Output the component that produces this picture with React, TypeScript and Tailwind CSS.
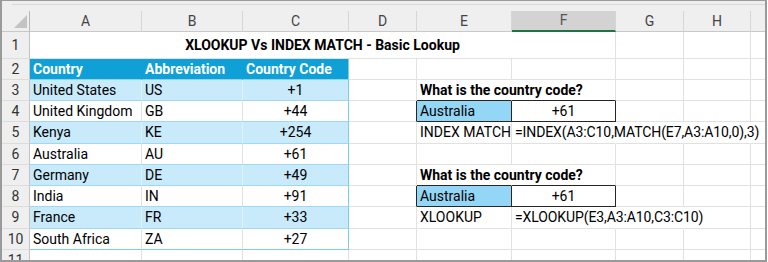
import React from "react";

const base = "flex items-center whitespace-nowrap px-[3px] text-[14px] text-black border-r border-b border-[#e1e1e1]";
const rh = "flex items-center justify-center text-[14px] text-[#333] bg-[#efefef] border-r border-b border-r-[#c4c4c4] border-b-[#dcdcdc]";
const ch = "flex items-center justify-center text-[14px] text-[#444] bg-[#efefef] border-r border-b border-r-[#d6d6d6] border-b-[#c8c8c8]";

const tblHead = "flex items-center whitespace-nowrap px-[3px] text-[14px] font-bold text-white bg-[#10a0d8] border-r border-b border-r-[#10a0d8] border-b-[#8ed3f1]";

function Cell({ c, children }: { c?: string; children?: React.ReactNode }) {
  return <div className={c ?? base}>{children}</div>;
}

const rows: [string, string, string][] = [
  ["United States", "US", "+1"],
  ["United Kingdom", "GB", "+44"],
  ["Kenya", "KE", "+254"],
  ["Australia", "AU", "+61"],
  ["Germany", "DE", "+49"],
  ["India", "IN", "+91"],
  ["France", "FR", "+33"],
  ["South Africa", "ZA", "+27"],
];

function TableCells({ i }: { i: number }) {
  const [a, b, c] = rows[i];
  const banded = i % 2 === 0;
  const last = i === rows.length - 1;
  const abCls = banded
    ? "flex items-center whitespace-nowrap px-[3px] text-[14px] text-black bg-[#c8eafa] border-r border-b border-r-[#dcf2fc] border-b-[#9dd9f3]"
    : last
    ? "flex items-center whitespace-nowrap px-[3px] text-[14px] text-black border-r border-b border-r-[#e1e1e1] border-b-[#7fcdee]"
    : "flex items-center whitespace-nowrap px-[3px] text-[14px] text-black border-r border-b border-r-[#e1e1e1] border-b-[#9dd9f3]";
  const cCls = banded
    ? "flex items-center justify-center whitespace-nowrap text-[14px] text-black bg-[#c8eafa] border-r border-b border-r-[#7fcdee] border-b-[#9dd9f3]"
    : last
    ? "flex items-center justify-center whitespace-nowrap text-[14px] text-black border-r border-b border-r-[#7fcdee] border-b-[#7fcdee]"
    : "flex items-center justify-center whitespace-nowrap text-[14px] text-black border-r border-b border-r-[#7fcdee] border-b-[#9dd9f3]";
  return (
    <>
      <Cell c={abCls}>{a}</Cell>
      <Cell c={abCls}>{b}</Cell>
      <Cell c={cCls}>{c}</Cell>
    </>
  );
}

const noR = "relative z-10 flex items-center whitespace-nowrap px-[3px] text-[14px] tracking-[-0.1px] text-black border-r border-b border-r-transparent border-b-[#e1e1e1]";
const qCls = "relative z-10 flex items-center whitespace-nowrap px-[3px] text-[14px] font-bold text-black border-r border-b border-r-transparent border-b-[#262626]";
const fAbove = "flex items-center border-r border-b border-r-[#e1e1e1] border-b-[#262626]";
const dLeft = "flex items-center border-r border-b border-r-[#262626] border-b-[#e1e1e1]";
const eBox = "flex items-center whitespace-nowrap px-[3px] text-[14px] text-black bg-[#94d6f5] border-r border-b border-[#262626]";
const fBox = "flex items-center justify-center whitespace-nowrap text-[14px] text-black border-r border-b border-[#262626]";
const lastCol = "border-b border-[#e1e1e1]";

export default function App() {
  const headers = ["A", "B", "C", "D", "E", "F", "G", "H", ""];
  return (
    <div className="w-[767px] h-[262px] bg-white font-['Roboto',sans-serif]">
      <div className="w-[767px] h-[262px] overflow-hidden border-x-2 border-t border-b-2 border-[#9a9a9a] bg-white">
        <div className="h-[10px] bg-[#efefef]">
          <div className="h-[3px]" />
          <div className="ml-[10px] h-[7px] border-t border-[#d9d9d9]" />
        </div>
        <div className="grid grid-cols-[28px_112px_101px_106px_68px_95px_104px_68px_67px_14px] grid-rows-[21px_27px_21px_21px_21px_22px_21px_21px_21px_22px_21px_21px]">
          <div className="relative bg-[#efefef] border-r border-b border-r-[#b8b8b8] border-b-[#c8c8c8]">
            <svg className="absolute right-[2px] bottom-[3px]" width="13" height="13" viewBox="0 0 13 13">
              <polygon points="13,0 13,13 0,13" fill="#c3c3c3" />
            </svg>
          </div>
          {headers.map((h, i) =>
            h === "F" ? (
              <div key={i} className="flex items-center justify-center text-[14px] text-[#555] bg-[#d3d3d3] border-r border-r-[#d6d6d6] border-b-2 border-b-[#217346]">
                F
              </div>
            ) : i === 8 ? (
              <div key={i} className="bg-[#efefef] border-b border-b-[#c8c8c8]" />
            ) : (
              <div key={i} className={ch}>{h}</div>
            )
          )}

          <Cell c={rh}>1</Cell>
          <div className="col-span-6 flex items-center justify-center whitespace-nowrap text-[14px] font-bold text-black border-r border-b border-[#e1e1e1]">
            XLOOKUP Vs INDEX MATCH - Basic Lookup
          </div>
          <Cell />
          <Cell />
          <Cell c={lastCol} />

          <Cell c={rh}>2</Cell>
          <Cell c={tblHead}>Country</Cell>
          <Cell c={tblHead}>Abbreviation</Cell>
          <Cell c="flex items-center whitespace-nowrap px-[3px] text-[14px] font-bold text-white bg-[#10a0d8] border-r border-b border-r-[#7fcdee] border-b-[#8ed3f1]">Country Code</Cell>
          <Cell />
          <Cell />
          <Cell />
          <Cell />
          <Cell />
          <Cell c={lastCol} />

          <Cell c={rh}>3</Cell>
          <TableCells i={0} />
          <Cell />
          <Cell c={qCls}>What is the country code?</Cell>
          <Cell c={fAbove} />
          <Cell />
          <Cell />
          <Cell c={lastCol} />

          <Cell c={rh}>4</Cell>
          <TableCells i={1} />
          <Cell c={dLeft} />
          <Cell c={eBox}>Australia</Cell>
          <Cell c={fBox}>+61</Cell>
          <Cell />
          <Cell />
          <Cell c={lastCol} />

          <Cell c={rh}>5</Cell>
          <TableCells i={2} />
          <Cell />
          <Cell>INDEX MATCH</Cell>
          <Cell c={noR}>=INDEX(A3:C10,MATCH(E7,A3:A10,0),3)</Cell>
          <Cell c={noR} />
          <Cell c={noR} />
          <Cell c={lastCol} />

          <Cell c={rh}>6</Cell>
          <TableCells i={3} />
          <Cell />
          <Cell />
          <Cell />
          <Cell />
          <Cell />
          <Cell c={lastCol} />

          <Cell c={rh}>7</Cell>
          <TableCells i={4} />
          <Cell />
          <Cell c={qCls}>What is the country code?</Cell>
          <Cell c={fAbove} />
          <Cell />
          <Cell />
          <Cell c={lastCol} />

          <Cell c={rh}>8</Cell>
          <TableCells i={5} />
          <Cell c={dLeft} />
          <Cell c={eBox}>Australia</Cell>
          <Cell c={fBox}>+61</Cell>
          <Cell />
          <Cell />
          <Cell c={lastCol} />

          <Cell c={rh}>9</Cell>
          <TableCells i={6} />
          <Cell />
          <Cell>XLOOKUP</Cell>
          <Cell c={noR}>=XLOOKUP(E3,A3:A10,C3:C10)</Cell>
          <Cell c={noR} />
          <Cell />
          <Cell c={lastCol} />

          <Cell c={rh}>10</Cell>
          <TableCells i={7} />
          <Cell />
          <Cell />
          <Cell />
          <Cell />
          <Cell />
          <Cell c={lastCol} />

          <Cell c={rh}>11</Cell>
          <Cell />
          <Cell />
          <Cell />
          <Cell />
          <Cell />
          <Cell />
          <Cell />
          <Cell />
          <Cell c={lastCol} />
        </div>
      </div>
    </div>
  );
}
